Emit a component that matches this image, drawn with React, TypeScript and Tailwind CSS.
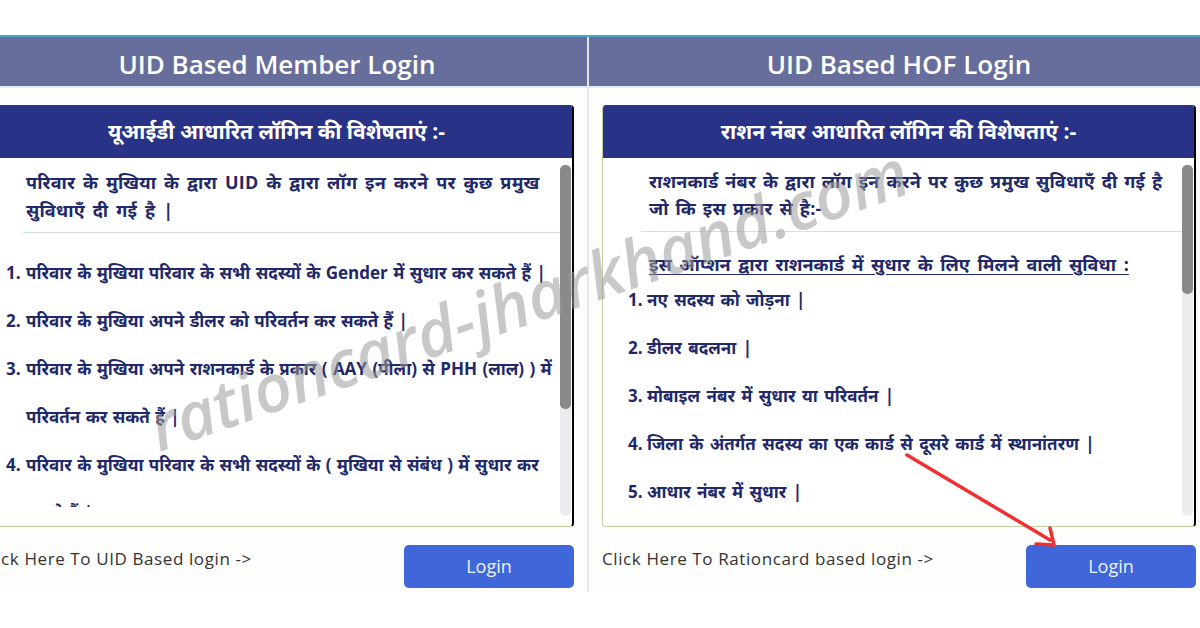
import React from 'react'

const NAVY_TEXT = 'text-[#1f2868]'

function Scrollbar({ thumb }: { thumb: number }) {
  return (
    <div className="w-[11px] shrink-0 pt-[7px] pb-[10px] mr-[1px]">
      <div className="h-full rounded-[5px] bg-[#ececef]">
        <div className="rounded-[5px] bg-[#8a8a8a]" style={{ height: thumb }} />
      </div>
    </div>
  )
}

function Card({ title, thumb, children }: { title: string; thumb: number; children: React.ReactNode }) {
  return (
    <div className="h-[422px] flex flex-col rounded-[4px] border border-[#c3cc9f] border-r-2 border-r-black border-t-0 overflow-hidden bg-white">
      <div className="h-[53px] shrink-0 bg-[#283286] flex items-center justify-center text-white text-[21px] font-bold">
        {title}
      </div>
      <div className="flex-1 flex min-h-0">
        <div className="flex-1 pb-[19px] min-w-0">
          <div className={`h-full overflow-hidden font-bold whitespace-nowrap ${NAVY_TEXT}`}>{children}</div>
        </div>
        <Scrollbar thumb={thumb} />
      </div>
    </div>
  )
}

function Panel({ heading, card, footer }: { heading: string; card: React.ReactNode; footer: string }) {
  return (
    <div className="w-[620px] shrink-0 h-[555px] flex flex-col">
      <div className="h-[51px] shrink-0 pt-[6px] bg-[#686e9b] border-b-2 border-[#e3e9f1] flex items-center justify-center text-white text-[26px] font-semibold">
        {heading}
      </div>
      <div className="flex-1 bg-[#fdfdfc] px-[13px] pt-[17px]">
        {card}
        <div className="flex items-start justify-between mt-[18px]">
          <span className="pt-[1px] text-[17px] tracking-[0.6px] text-[#333] whitespace-nowrap">{footer}</span>
          <button className="w-[170px] h-[43px] rounded-[5px] bg-[#3f67d9] text-[#eef1fb] text-[18px]">Login</button>
        </div>
      </div>
    </div>
  )
}

// each item is a list of visual lines, as they wrap in the original
const uidItems = [
  ['परिवार के मुखिया परिवार के सभी सदस्यों के Gender में सुधार कर सकते हैं |'],
  ['परिवार के मुखिया अपने डीलर को परिवर्तन कर सकते हैं |'],
  ['परिवार के मुखिया अपने राशनकार्ड के प्रकार ( AAY (पीला) से PHH (लाल) ) में', 'परिवर्तन कर सकते हैं |'],
  ['परिवार के मुखिया परिवार के सभी सदस्यों के ( मुखिया से संबंध ) में सुधार कर', 'सकते हैं |'],
]

const hofItems = [
  'नए सदस्य को जोड़ना |',
  'डीलर बदलना |',
  'मोबाइल नंबर में सुधार या परिवर्तन |',
  'जिला के अंतर्गत सदस्य का एक कार्ड से दूसरे कार्ड में स्थानांतरण |',
  'आधार नंबर में सुधार |',
]

export default function App() {
  return (
    <div className="relative w-[1200px] h-[628px] overflow-hidden bg-white font-['Open_Sans','Noto_Sans',sans-serif]">
      <div className="h-[35px]" />
      <div className="flex ml-[-33px] w-[1242px] border-t-2 border-[#4aa5c4]">
        <Panel
          heading="UID Based Member Login"
          footer="Click Here To UID Based login ->"
          card={
            <Card title="यूआईडी आधारित लॉगिन की विशेषताएं :-" thumb={244}>
              <p className="pl-[45px] pt-[10px] text-[18px] leading-[28px] [word-spacing:3px] tracking-[0.2px]">
                परिवार के मुखिया के द्वारा UID के द्वारा लॉग इन करने पर कुछ प्रमुख
                <br />
                सुविधाएँ दी गई है |
              </p>
              <div className="ml-[42px] mt-[8px] h-px bg-[#cfe3e6]" />
              <ol className="mt-[16px] pl-[25px] text-[17px] leading-[48px] [word-spacing:1px]">
                {uidItems.map((lines, i) => (
                  <li key={i} className="flex">
                    <span className="w-[20px] shrink-0">{i + 1}.</span>
                    <span className="flex flex-col">
                      {lines.map((l, j) => (
                        <span key={j}>{l}</span>
                      ))}
                    </span>
                  </li>
                ))}
              </ol>
            </Card>
          }
        />
        <div className="w-[2px] shrink-0 bg-[#e2e7ef]" />
        <Panel
          heading="UID Based HOF Login"
          footer="Click Here To Rationcard based login ->"
          card={
            <Card title="राशन नंबर आधारित लॉगिन की विशेषताएं :-" thumb={129}>
              <p className="pl-[46px] pt-[10px] text-[18px] leading-[27px] [word-spacing:2px] tracking-[0.2px]">
                राशनकार्ड नंबर के द्वारा लॉग इन करने पर कुछ प्रमुख सुविधाएँ दी गई है
                <br />
                जो कि इस प्रकार से है:-
              </p>
              <div className="ml-[38px] mt-[9px] h-px bg-[#cfe3e6]" />
              <p className="pl-[46px] mt-[20px] text-[18px] leading-[24px] [word-spacing:3px] underline underline-offset-[3px]">
                इस ऑप्शन द्वारा राशनकार्ड में सुधार के लिए मिलने वाली सुविधा :
              </p>
              <ol className="pl-[25px] text-[17px] leading-[48px] [word-spacing:2px]">
                {hofItems.map((t, i) => (
                  <li key={i} className="flex">
                    <span className="w-[19px] shrink-0">{i + 1}.</span>
                    <span>{t}</span>
                  </li>
                ))}
              </ol>
            </Card>
          }
        />
      </div>

      {/* watermark */}
      <div className="absolute left-[528px] top-[298px] -translate-x-1/2 -translate-y-1/2 -rotate-[19deg] whitespace-nowrap text-[66px] font-semibold italic text-[#9a9a9a]/55 pointer-events-none">
        rationcard-jharkhand.com
      </div>

      {/* red arrow */}
      <svg className="absolute left-0 top-0 pointer-events-none" width="1200" height="628">
        <line x1="907" y1="455" x2="1050" y2="540" stroke="#f03030" strokeWidth="3.5" strokeLinecap="round" />
        <polyline points="1036,544 1054,545 1050,528" fill="none" stroke="#f03030" strokeWidth="3.5" strokeLinecap="round" strokeLinejoin="round" />
      </svg>
    </div>
  )
}
